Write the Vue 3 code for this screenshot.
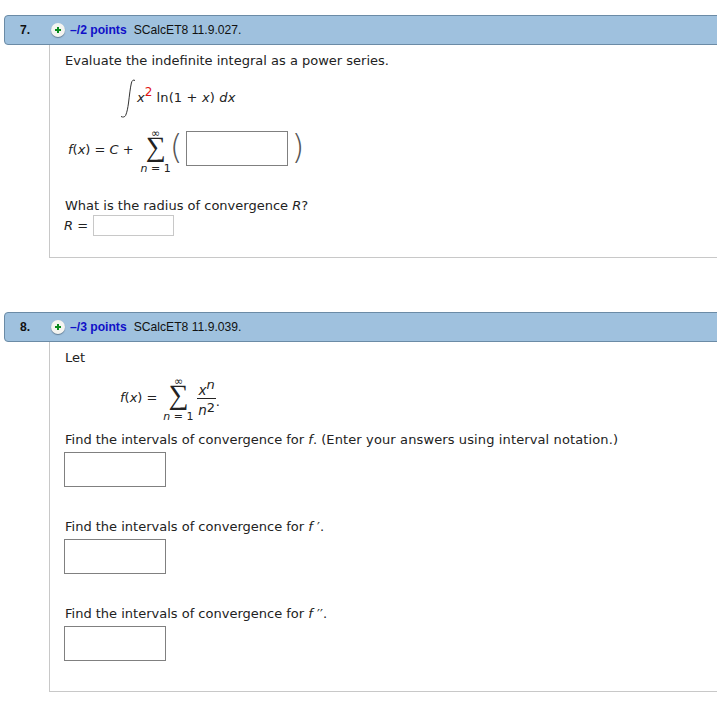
<script setup>
const sumGlyph = '∑'
</script>

<template>
  <div class="page">
    <section class="question first">
      <header class="bar">
        <span class="num">7.</span>
        <span class="plus"><svg viewBox="0 0 14 14" width="14" height="14"><path d="M7 4v6M4 7h6" stroke="#0a8a1e" stroke-width="2" fill="none" /></svg></span>
        <span class="points">–/2 points</span>
        <span class="ref">SCalcET8 11.9.027.</span>
      </header>
      <div class="body body-one">
        <p class="text">Evaluate the indefinite integral as a power series.</p>
        <div class="integral">
          <svg class="int-sign" viewBox="0 0 16 40" width="16" height="40">
            <path d="M15 2.500c-1.600-1-3-.2-3.600 2.500C10.200 10 9.500 17 8.500 25c-.7 5-1.400 9-2.900 12.500C4.800 39 3 39.500 1 38.500" fill="none" stroke="#333" stroke-width="1" />
          </svg>
          <span class="math"><i>x</i><sup class="red">2</sup> <span class="ln">ln(1 + <i>x</i>) <i>dx</i></span></span>
        </div>
        <div class="series">
          <span class="math"><i>f</i>(<i>x</i>) = <i>C</i> +</span>
          <span class="sum">
            <span class="lim top">∞</span>
            <span class="sigma">{{ sumGlyph }}</span>
            <span class="lim"><i>n</i> = 1</span>
          </span>
          <span class="paren left">(</span>
          <span class="box wide"></span>
          <span class="paren right">)</span>
        </div>
        <p class="text radius">What is the radius of convergence <i>R</i>?</p>
        <div class="answer">
          <span class="math"><i>R</i> =</span>
          <span class="box small"></span>
        </div>
      </div>
    </section>

    <section class="question">
      <header class="bar">
        <span class="num">8.</span>
        <span class="plus"><svg viewBox="0 0 14 14" width="14" height="14"><path d="M7 4v6M4 7h6" stroke="#0a8a1e" stroke-width="2" fill="none" /></svg></span>
        <span class="points">–/3 points</span>
        <span class="ref">SCalcET8 11.9.039.</span>
      </header>
      <div class="body body-two">
        <p class="text">Let</p>
        <div class="series second">
          <span class="math"><i>f</i>(<i>x</i>) =</span>
          <span class="sum">
            <span class="lim top">∞</span>
            <span class="sigma">{{ sumGlyph }}</span>
            <span class="lim"><i>n</i> = 1</span>
          </span>
          <span class="frac">
            <span class="over"><i>x</i><sup><i>n</i></sup></span>
            <span class="under"><i>n</i><sup>2</sup></span>
          </span>
          <span class="dot">.</span>
        </div>
        <p class="text find-first">Find the intervals of convergence for <i>f</i>. <span class="note">(Enter your answers using interval notation.)</span></p>
        <span class="box block"></span>
        <p class="text find">Find the intervals of convergence for <i>f</i> ′.</p>
        <span class="box block"></span>
        <p class="text find">Find the intervals of convergence for <i>f</i> ′′.</p>
        <span class="box block"></span>
      </div>
    </section>
  </div>
</template>

<style>
html,
body {
  background: #fff;
}
</style>

<style scoped>
.page {
  width: 717px;
  height: 708px;
  overflow: hidden;
  padding: 15px 0 0 4px;
  box-sizing: border-box;
  font-family: "DejaVu Sans", Verdana, sans-serif;
  font-size: 13px;
  color: #222;
}

.question {
  margin-bottom: 54px;
  width: 740px;
}

.bar {
  display: flex;
  align-items: center;
  height: 30px;
  box-sizing: border-box;
  background: #9fc1de;
  border: 1px solid #6b8ba6;
  border-radius: 4px;
  font-family: "Liberation Sans", Arial, sans-serif;
  font-size: 12.15px;
  color: #111;
}

.num {
  width: 46px;
  padding-left: 15px;
  box-sizing: border-box;
  font-weight: 700;
}

.plus {
  display: grid;
  place-items: center;
  width: 14px;
  height: 14px;
  border-radius: 50%;
  background: #f4f4f0;
  box-shadow: 0 1px 1px rgba(40, 60, 80, 0.5);
}

.points {
  margin-left: 5px;
  font-weight: 700;
  color: #1010c8;
}

.ref {
  margin-left: 7px;
}

.body {
  margin-left: 45px;
  padding-left: 14px;
  border-left: 1px solid #c8c8c8;
  border-bottom: 1px solid #c8c8c8;
  box-sizing: border-box;
}

.body-one {
  height: 213px;
  padding-top: 8px;
}

.body-two {
  height: 350px;
  padding-top: 8px;
}

.text {
  margin: 0;
  padding-left: 1px;
  line-height: 16px;
  white-space: nowrap;
}

.note {
  letter-spacing: 0.12px;
}

i {
  font-family: "DejaVu Sans", Verdana, sans-serif;
  font-style: oblique;
}

sup {
  font-size: 13px;
  line-height: 0;
  vertical-align: 6px;
}

.red {
  font-size: 12px;
  color: #e01010;
}

.integral {
  display: flex;
  align-items: center;
  height: 40px;
  margin-top: 9px;
  margin-left: 56px;
}

.int-sign {
  flex: none;
  margin-right: 1px;
}

.ln {
  letter-spacing: 0.15px;
}

.series {
  display: flex;
  align-items: center;
  height: 50px;
  margin-top: 5px;
  margin-left: 4px;
}

.math {
  white-space: pre;
  line-height: 16px;
}

.series > .math {
  padding-top: 3px;
}

.sum {
  display: flex;
  flex-direction: column;
  align-items: center;
  width: 32px;
  margin-top: 5px;
  margin-left: 6px;
  font-size: 11px;
}

.lim {
  height: 11px;
  line-height: 11px;
  white-space: pre;
}

.sigma {
  height: 24px;
  font-family: "Liberation Serif", serif;
  font-size: 28px;
  line-height: 16px;
}

.paren {
  font-size: 33px;
  font-weight: 200;
  line-height: 34px;
  color: #555;
}

.left {
  margin-left: -2px;
  margin-right: 3px;
}

.right {
  margin-left: 4px;
}

.box {
  display: block;
  box-sizing: border-box;
  background: #fff;
  border: 1px solid #808080;
}

.wide {
  width: 102px;
  height: 35px;
}

.radius {
  margin-top: 25px;
}

.answer {
  display: flex;
  align-items: center;
  margin-top: 1px;
}

.small {
  width: 81px;
  height: 21px;
  margin-left: 5px;
  border-color: #c8c8c8;
}

.second {
  margin-top: 4px;
  margin-left: 56px;
  height: 56px;
}

.second > .math {
  padding-top: 0;
}

.second .sum {
  margin-top: 2px;
  margin-left: 5px;
}

.frac {
  display: flex;
  flex-direction: column;
  align-items: center;
  margin-left: 3px;
  font-size: 13.5px;
}

.over {
  line-height: 16px;
  padding: 1px 1px 0;
  border-bottom: 1px solid #222;
}

.under {
  line-height: 17px;
  padding-top: 3px;
  margin-bottom: -3px;
}

.under sup {
  vertical-align: 3px;
}

.dot {
  align-self: center;
  margin-top: 6px;
}

.find-first {
  margin-top: 6px;
}

.block {
  width: 102px;
  height: 35px;
  margin-top: 4px;
}

.find {
  margin-top: 32px;
}
</style>
